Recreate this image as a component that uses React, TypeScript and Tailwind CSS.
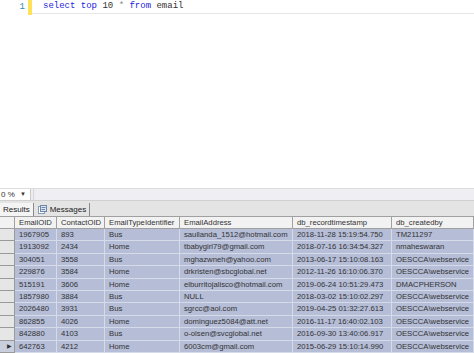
import React from "react";

const rows = [
  ["1967905", "893", "Bus", "saullanda_1512@hotmail.com", "2018-11-28 15:19:54.750", "TM211297"],
  ["1913092", "2434", "Home", "tbabygirl79@gmail.com", "2018-07-16 16:34:54.327", "nmaheswaran"],
  ["304051", "3558", "Bus", "mghazwneh@yahoo.com", "2013-06-17 15:10:08.163", "OESCCA\\webservice"],
  ["229876", "3584", "Home", "drkristen@sbcglobal.net", "2012-11-26 16:10:06.370", "OESCCA\\webservice"],
  ["515191", "3606", "Home", "elburritojalisco@hotmail.com", "2019-06-24 10:51:29.473", "DMACPHERSON"],
  ["1857980", "3884", "Bus", "NULL", "2018-03-02 15:10:02.297", "OESCCA\\webservice"],
  ["2026480", "3931", "Bus", "sgrcc@aol.com", "2019-04-25 01:32:27.613", "OESCCA\\webservice"],
  ["862855", "4026", "Home", "dominguez5084@att.net", "2016-11-17 16:40:02.103", "OESCCA\\webservice"],
  ["842880", "4103", "Bus", "o-olsen@svcglobal.net", "2016-09-30 13:40:06.917", "OESCCA\\webservice"],
  ["642763", "4212", "Home", "6003cm@gmail.com", "2015-06-29 15:10:14.990", "OESCCA\\webservice"],
];

const headers = ["EmailOID", "ContactOID", "EmailTypeIdentifier", "EmailAddress", "db_recordtimestamp", "db_createdby"];
const widths = ["w-[42px]", "w-[48px]", "w-[75px]", "w-[113px]", "w-[99px]", "flex-1"];

const App = () => {
  return (
    <div className="w-[474px] h-[353px] overflow-hidden flex flex-col bg-white" style={{ fontFamily: "'Liberation Sans', Arial, sans-serif" }}>
      {/* Query editor */}
      <div className="h-[188px] bg-white">
        <div className="flex h-[14px]">
          <div className="w-[28px] text-right text-[9px] leading-[14px] text-[#2b91af] pr-[3px]" style={{ fontFamily: "'Liberation Mono', monospace" }}>1</div>
          <div className="w-[4px] h-[15px] bg-[#ffe25a]"></div>
          <div className="flex-1 border-b border-[#e6e6e6] pl-[11px] text-[9px] leading-[13px] whitespace-pre" style={{ fontFamily: "'Liberation Mono', monospace" }}>
            <span className="text-[#2424e0]">select</span>
            <span className="text-[#222]"> </span>
            <span className="text-[#2424e0]">top</span>
            <span className="text-[#333]"> 10 </span>
            <span className="text-[#888]">*</span>
            <span className="text-[#333]"> </span>
            <span className="text-[#2424e0]">from</span>
            <span className="text-[#333]"> email</span>
          </div>
        </div>
      </div>

      {/* Zoom bar */}
      <div className="h-[12px] flex bg-[#ededf0] border-t border-[#dcdcdc]">
        <div className="w-[31px] bg-white border-r border-[#c8c8c8] flex items-center text-[8px] text-[#333] pl-[1px]">
          <span>0 %</span>
          <span className="ml-auto mr-[4px] text-[6px]">▼</span>
        </div>
        <div className="w-[3px] ml-[2px] border-l border-[#d8d8e0]"></div>
        <div className="flex-1 bg-[#eeeef3]"></div>
      </div>

      {/* Tabs */}
      <div className="h-[16px] flex items-end bg-[#e4e4e4] border-t border-[#d0d0d0] text-[8px] text-[#222]">
        <div className="h-[13px] px-[3px] flex items-center bg-[#f4f4f4] border-r border-[#8a8a8a]">Results</div>
        <div className="h-[13px] ml-[1px] px-[3px] flex items-center gap-[3px] border-r border-[#8a8a8a]">
          <svg width="9" height="9" viewBox="0 0 9 9">
            <rect x="0.5" y="1.5" width="6" height="7" fill="#fff" stroke="#8a9bb5" />
            <rect x="2.5" y="0.5" width="6" height="6" fill="#dbe6f5" stroke="#6f86a8" />
            <line x1="3.5" y1="2.5" x2="7.5" y2="2.5" stroke="#6f86a8" />
            <line x1="3.5" y1="4.5" x2="7" y2="4.5" stroke="#6f86a8" />
          </svg>
          <span>Messages</span>
        </div>
      </div>

      {/* Grid */}
      <div className="flex-1 bg-white text-[7.7px] text-[#333]">
        <div className="flex h-[13px] bg-[#f2f2f2] border-y border-[#a0a0a0]">
          <div className="w-[15px] border-r border-[#a0a0a0]"></div>
          {headers.map((h, i) => (
            <div key={h} className={`${widths[i]} border-r border-[#a0a0a0] pl-[4px] leading-[11px] whitespace-nowrap overflow-hidden`}>{h}</div>
          ))}
        </div>
        {rows.map((r, ri) => (
          <div key={ri} className="flex h-[12.4px]">
            <div className={`w-[15px] border-r border-b border-[#9a9a9a] ${ri === rows.length - 1 ? "bg-[#c9cfdc]" : "bg-[#e6e6e6]"} flex items-center justify-end pr-[2px]`}>
              {ri === rows.length - 1 && <span className="text-[6px] text-[#333]">▶</span>}
            </div>
            {r.map((c, ci) => (
              <div key={ci} className={`${widths[ci]} bg-[#b5bdd7] border-r border-b border-[#d6dbe9] pl-[4px] leading-[11px] whitespace-nowrap overflow-hidden`}>{c}</div>
            ))}
          </div>
        ))}
      </div>
    </div>
  );
};

export default App;
